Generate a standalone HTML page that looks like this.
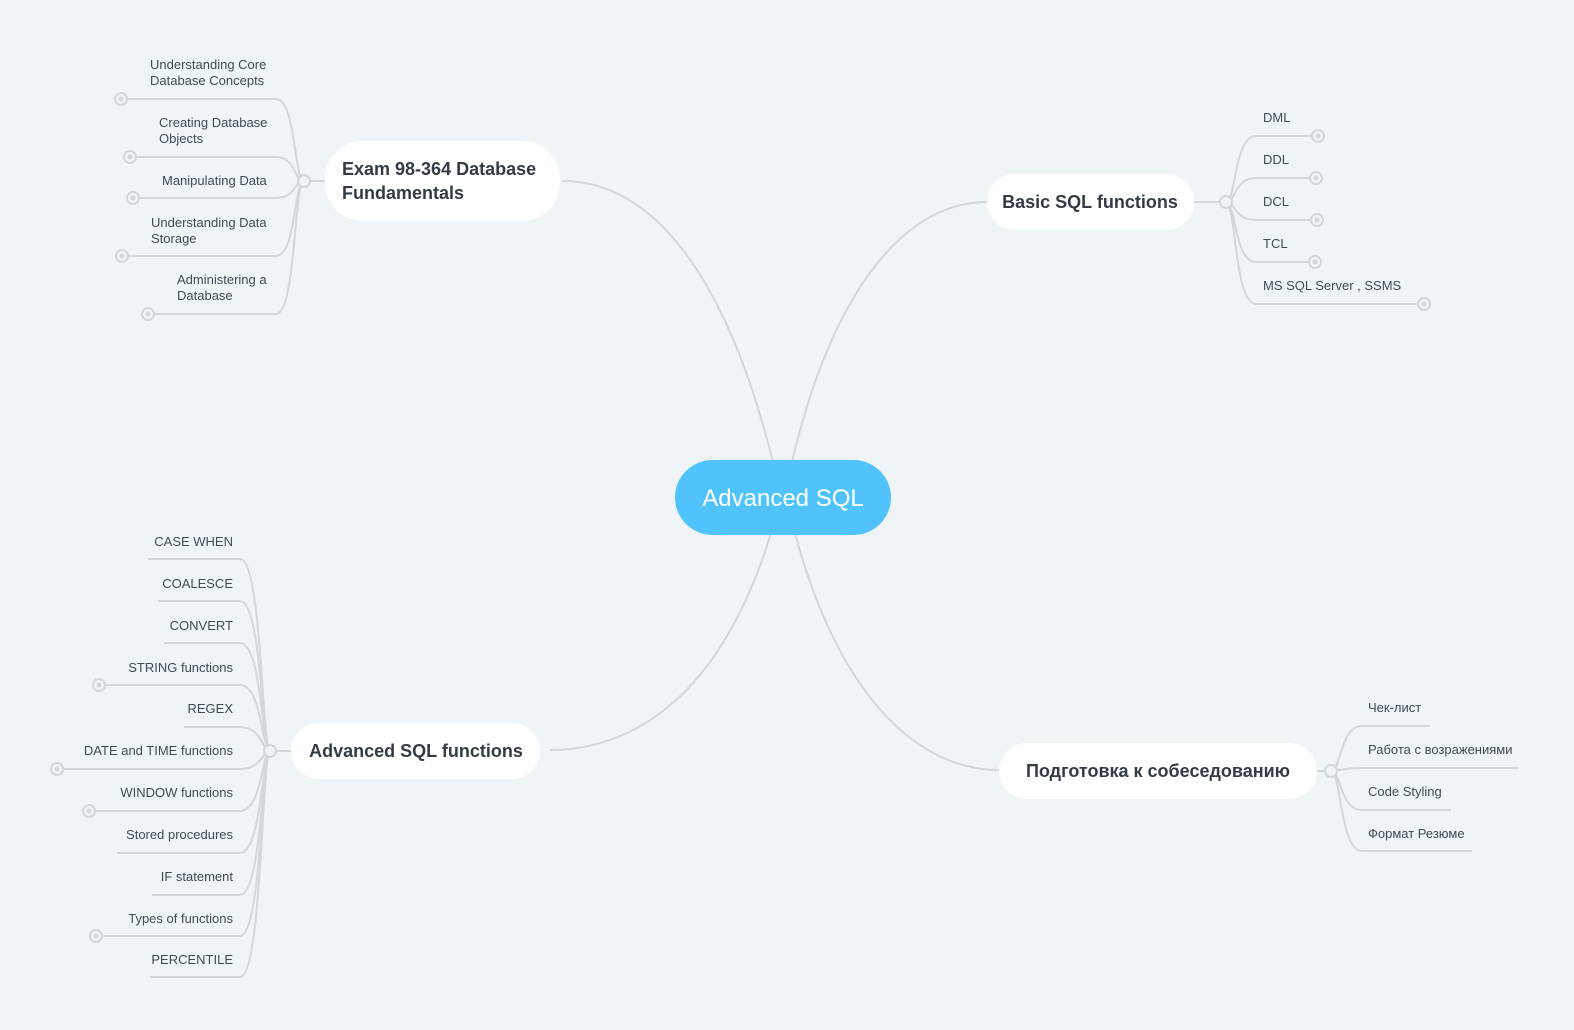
<!DOCTYPE html>
<html><head><meta charset="utf-8"><style>
html,body{margin:0;padding:0;background:#eff4f7;}
svg{display:block;}
text{font-family:"Liberation Sans","Noto Sans CJK SC",sans-serif;}
.t{font-size:13px;fill:#434b53;}
.b{font-size:18px;font-weight:bold;fill:#333c45;}
.l{fill:none;stroke:#d3d7da;stroke-width:2;}
.m{fill:#eff4f7;stroke:#d3d7da;stroke-width:2;}
.d{fill:#d3d7da;}
</style></head><body>
<svg width="1574" height="1030" viewBox="0 0 1574 1030" xmlns="http://www.w3.org/2000/svg">
<rect width="1574" height="1030" fill="#eff4f7"/>
<!-- main links -->
<path class="l" d="M773,462 C730,290 660,181 562,181"/>
<path class="l" d="M792,462 C830,300 900,202 987,202"/>
<path class="l" d="M771,533 C720,700 630,750 550,750"/>
<path class="l" d="M795,533 C840,700 920,770 999,770"/>

<!-- Exam branch -->
<path class="l" d="M325,181 L310,181"/>
<path class="l" d="M304,181 C294,181 296,99 276,99 L127,99"/>
<path class="l" d="M304,181 C294,181 296,157 276,157 L136,157"/>
<path class="l" d="M304,181 C294,181 296,198 276,198 L139,198"/>
<path class="l" d="M304,181 C294,181 296,256 276,256 L128,256"/>
<path class="l" d="M304,181 C294,181 296,314 276,314 L154,314"/>
<circle class="m" cx="304" cy="181" r="6"/>
<g><circle class="m" cx="121" cy="99" r="6"/><circle class="d" cx="121" cy="99" r="2.5"/>
<circle class="m" cx="130" cy="157" r="6"/><circle class="d" cx="130" cy="157" r="2.5"/>
<circle class="m" cx="133" cy="198" r="6"/><circle class="d" cx="133" cy="198" r="2.5"/>
<circle class="m" cx="122" cy="256" r="6"/><circle class="d" cx="122" cy="256" r="2.5"/>
<circle class="m" cx="148" cy="314" r="6"/><circle class="d" cx="148" cy="314" r="2.5"/></g>
<text class="t" x="150" y="69">Understanding Core</text>
<text class="t" x="150" y="85">Database Concepts</text>
<text class="t" x="159" y="127">Creating Database</text>
<text class="t" x="159" y="143">Objects</text>
<text class="t" x="162" y="185">Manipulating Data</text>
<text class="t" x="151" y="227">Understanding Data</text>
<text class="t" x="151" y="243">Storage</text>
<text class="t" x="177" y="284">Administering a</text>
<text class="t" x="177" y="300">Database</text>
<rect x="325" y="141" width="235" height="80" rx="38" fill="#fff"/>
<text class="b" x="342" y="175">Exam 98-364 Database</text>
<text class="b" x="342" y="199">Fundamentals</text>

<!-- Basic SQL branch -->
<path class="l" d="M1194,202 L1220,202"/>
<path class="l" d="M1226,202 C1236,202 1234,136 1256,136 L1312,136"/>
<path class="l" d="M1226,202 C1236,202 1234,178 1256,178 L1310,178"/>
<path class="l" d="M1226,202 C1236,202 1234,220 1256,220 L1311,220"/>
<path class="l" d="M1226,202 C1236,202 1234,262 1256,262 L1309,262"/>
<path class="l" d="M1226,202 C1236,202 1234,304 1256,304 L1418,304"/>
<circle class="m" cx="1226" cy="202" r="6"/>
<circle class="m" cx="1318" cy="136" r="6"/><circle class="d" cx="1318" cy="136" r="2.5"/>
<circle class="m" cx="1316" cy="178" r="6"/><circle class="d" cx="1316" cy="178" r="2.5"/>
<circle class="m" cx="1317" cy="220" r="6"/><circle class="d" cx="1317" cy="220" r="2.5"/>
<circle class="m" cx="1315" cy="262" r="6"/><circle class="d" cx="1315" cy="262" r="2.5"/>
<circle class="m" cx="1424" cy="304" r="6"/><circle class="d" cx="1424" cy="304" r="2.5"/>
<text class="t" x="1263" y="122">DML</text>
<text class="t" x="1263" y="164">DDL</text>
<text class="t" x="1263" y="206">DCL</text>
<text class="t" x="1263" y="248">TCL</text>
<text class="t" x="1263" y="290">MS SQL Server , SSMS</text>
<rect x="987" y="174" width="207" height="56" rx="28" fill="#fff"/>
<text class="b" x="1090" y="208" text-anchor="middle">Basic SQL functions</text>

<!-- Advanced SQL functions branch -->
<path class="l" d="M291,751 L276,751"/>
<g class="l">
<path class="l" d="M270,751 C262,751 262,559 240,559 L148,559"/>
<path class="l" d="M270,751 C262,751 262,601 240,601 L158,601"/>
<path class="l" d="M270,751 C262,751 262,643 240,643 L164,643"/>
<path class="l" d="M270,751 C262,751 262,685 240,685 L105,685"/>
<path class="l" d="M270,751 C262,751 262,727 240,727 L184,727"/>
<path class="l" d="M270,751 C262,751 262,769 240,769 L63,769"/>
<path class="l" d="M270,751 C262,751 262,811 240,811 L95,811"/>
<path class="l" d="M270,751 C262,751 262,853 240,853 L117,853"/>
<path class="l" d="M270,751 C262,751 262,895 240,895 L152,895"/>
<path class="l" d="M270,751 C262,751 262,936 240,936 L102,936"/>
<path class="l" d="M270,751 C262,751 262,977 240,977 L150,977"/>
</g>
<circle class="m" cx="270" cy="751" r="6"/>
<circle class="m" cx="99" cy="685" r="6"/><circle class="d" cx="99" cy="685" r="2.5"/>
<circle class="m" cx="57" cy="769" r="6"/><circle class="d" cx="57" cy="769" r="2.5"/>
<circle class="m" cx="89" cy="811" r="6"/><circle class="d" cx="89" cy="811" r="2.5"/>
<circle class="m" cx="96" cy="936" r="6"/><circle class="d" cx="96" cy="936" r="2.5"/>
<g text-anchor="end">
<text class="t" x="233" y="546">CASE WHEN</text>
<text class="t" x="233" y="588">COALESCE</text>
<text class="t" x="233" y="630">CONVERT</text>
<text class="t" x="233" y="672">STRING functions</text>
<text class="t" x="233" y="713">REGEX</text>
<text class="t" x="233" y="755">DATE and TIME functions</text>
<text class="t" x="233" y="797">WINDOW functions</text>
<text class="t" x="233" y="839">Stored procedures</text>
<text class="t" x="233" y="881">IF statement</text>
<text class="t" x="233" y="923">Types of functions</text>
<text class="t" x="233" y="964">PERCENTILE</text>
</g>
<rect x="291" y="723" width="249" height="56" rx="28" fill="#fff"/>
<text class="b" x="416" y="757" text-anchor="middle">Advanced SQL functions</text>

<!-- Podgotovka branch -->
<path class="l" d="M1317,771 L1325,771"/>
<path class="l" d="M1331,771 C1341,771 1340,726 1362,726 L1430,726"/>
<path class="l" d="M1331,771 C1341,771 1340,768 1362,768 L1519,768"/>
<path class="l" d="M1331,771 C1341,771 1340,810 1362,810 L1451,810"/>
<path class="l" d="M1331,771 C1341,771 1340,851 1362,851 L1472,851"/>
<circle class="m" cx="1331" cy="771" r="6"/>
<text class="t" x="1368" y="712">Чек-лист</text>
<text class="t" x="1368" y="754">Работа с возражениями</text>
<text class="t" x="1368" y="796">Code Styling</text>
<text class="t" x="1368" y="838">Формат Резюме</text>
<rect x="999" y="743" width="318" height="56" rx="28" fill="#fff"/>
<text class="b" x="1158" y="777" text-anchor="middle">Подготовка к собеседованию</text>

<!-- center -->
<rect x="675" y="460" width="216" height="75" rx="37.5" fill="#50c3fd"/>
<text x="783" y="506" text-anchor="middle" font-size="24" fill="#fff">Advanced SQL</text>
</svg>
</body></html>
